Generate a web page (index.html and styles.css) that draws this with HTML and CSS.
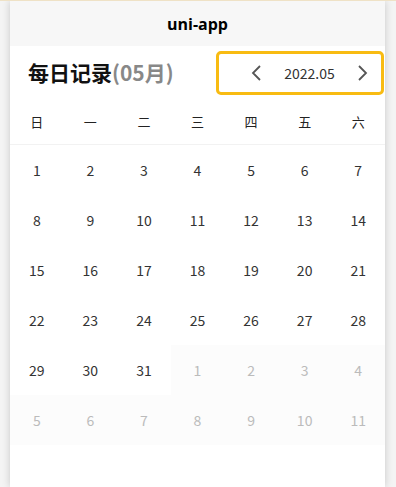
FILE: index.html
```html
<!DOCTYPE html>
<html>
<head>
<meta charset="utf-8">
<link rel="stylesheet" href="styles.css">
</head>
<body>
<div class="frame">
  <div class="navbar">uni-app</div>
  <div class="head">
    <div class="title">每日记录<span class="month">(05月)</span></div>
    <div class="picker">
      <svg class="arrow" width="14" height="18" viewBox="0 0 14 18"><path d="M10 2 L3 9 L10 16" fill="none" stroke="#555" stroke-width="1.8"/></svg>
      <span class="date">2022.05</span>
      <svg class="arrow" width="14" height="18" viewBox="0 0 14 18"><path d="M4 2 L11 9 L4 16" fill="none" stroke="#555" stroke-width="1.8"/></svg>
    </div>
  </div>
  <div class="week">
    <span>日</span><span>一</span><span>二</span><span>三</span><span>四</span><span>五</span><span>六</span>
  </div>
  <div class="days">
    <span>1</span><span>2</span><span>3</span><span>4</span><span>5</span><span>6</span><span>7</span>
    <span>8</span><span>9</span><span>10</span><span>11</span><span>12</span><span>13</span><span>14</span>
    <span>15</span><span>16</span><span>17</span><span>18</span><span>19</span><span>20</span><span>21</span>
    <span>22</span><span>23</span><span>24</span><span>25</span><span>26</span><span>27</span><span>28</span>
    <span>29</span><span>30</span><span>31</span><span class="other">1</span><span class="other">2</span><span class="other">3</span><span class="other">4</span>
    <span class="other">5</span><span class="other">6</span><span class="other">7</span><span class="other">8</span><span class="other">9</span><span class="other">10</span><span class="other">11</span>
  </div>
</div>
</body>
</html>
```
FILE: styles.css
```css
html, body {
  margin: 0;
  padding: 0;
}
body {
  background: #f4f4f4;
  border-top: 1px solid #efe2c6;
  height: 486px;
  overflow: hidden;
  font-family: "Noto Sans CJK SC", "Open Sans", sans-serif;
  color: #333;
}
.frame {
  margin: 0 11px 0 10px;
  background: #fff;
  height: 486px;
  box-shadow: 0 0 8px rgba(0, 0, 0, 0.18);
}
.navbar {
  height: 45px;
  background: #f7f7f7;
  display: flex;
  align-items: center;
  justify-content: center;
  font-family: "Open Sans", sans-serif;
  font-weight: bold;
  font-size: 16px;
  color: #000;
  padding-top: 1px;
  box-sizing: border-box;
}
.head {
  height: 52px;
  display: flex;
  align-items: center;
  justify-content: space-between;
  padding: 0 1px 0 18px;
}
.title {
  font-weight: bold;
  font-size: 21px;
  color: #111;
}
.month {
  color: #888;
}
.picker {
  width: 168px;
  height: 44px;
  box-sizing: border-box;
  border: 3px solid #f8bb12;
  border-radius: 5px;
  display: flex;
  align-items: center;
  padding: 0 12px 0 31px;
  margin-top: 2px;
}
.arrow {
  flex: none;
}
.date {
  flex: 1;
  text-align: center;
  font-size: 14px;
  color: #333;
}
.week {
  display: grid;
  grid-template-columns: repeat(7, 1fr);
  height: 45px;
  align-items: center;
  border-bottom: 1px solid #f2f2f2;
  font-size: 13px;
  color: #222;
  padding-top: 1px;
}
.week span, .days span {
  text-align: center;
}
.days {
  display: grid;
  grid-template-columns: repeat(7, 1fr);
  grid-auto-rows: 50px;
  font-size: 14px;
}
.days span {
  display: flex;
  align-items: center;
  justify-content: center;
  color: #333;
}
.days .other {
  color: #bbb;
  background: #fcfcfc;
}
```
